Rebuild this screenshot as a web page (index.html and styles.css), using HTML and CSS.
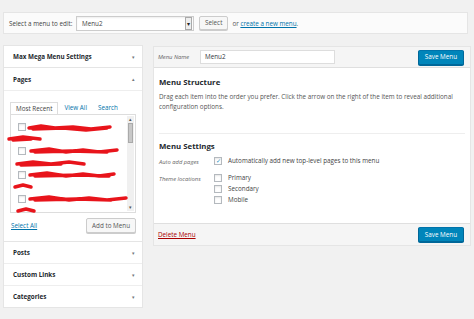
FILE: index.html
```html
<!DOCTYPE html>
<html lang="en">
<head>
  <meta charset="UTF-8">
  <title>Menus</title>
  <link rel="stylesheet" href="styles.css">
</head>
<body>

<!-- Menu picker -->
<div class="manage-menus">
  <span class="picker-label">Select a menu to edit:</span>
  <div class="fake-select">
    <span>Menu2</span>
    <span class="select-arrow">&#9662;</span>
  </div>
  <button class="btn">Select</button>
  <span class="or-text">or <a href="#">create a new menu</a>.</span>
</div>

<div class="columns">

  <!-- Left: accordion of items to add -->
  <div class="side">
    <div class="box">
      <div class="box-head">Max Mega Menu Settings <span class="arrow">&#9662;</span></div>
    </div>

    <div class="box accordion">
      <div class="box-head">Pages <span class="arrow">&#9652;</span></div>
      <div class="box-body">
        <div class="tabs">
          <span class="tab active">Most Recent</span>
          <a class="tab" href="#">View All</a>
          <a class="tab" href="#">Search</a>
        </div>
        <div class="tab-panel">
          <ul class="page-list">
            <li><span class="check"></span></li>
            <li><span class="check"></span></li>
            <li><span class="check"></span></li>
            <li><span class="check"></span></li>
          </ul>
          <div class="scrollbar">
            <span class="sb-arrow">&#9652;</span>
            <span class="sb-thumb"></span>
            <span class="sb-fill"></span>
            <span class="sb-arrow">&#9662;</span>
          </div>
          <!-- redacted titles -->
          <svg class="scribbles" width="130" height="100" viewBox="0 0 130 100">
            <g fill="none" stroke="#e8141b" stroke-linecap="round" stroke-linejoin="round">
              <path stroke-width="3.5" d="M18 13 L30 11 L44 13 L62 12 L80 14 L99 12 M22 14 L52 13 L75 15 L96 13"/>
              <path stroke-width="3.5" d="M-2 24 L12 22 L29 24 M2 25 L20 24"/>
              <path stroke-width="3.5" d="M20 36 L38 34 L55 37 L72 35 L88 37 L106 35 M24 37 L60 36 L96 37"/>
              <path stroke-width="3.5" d="M6 49 L22 47 L40 49 L58 47 L73 49 M10 50 L50 49"/>
              <path stroke-width="3.5" d="M19 60 L36 58 L55 61 L72 59 L88 61 L103 59 M24 61 L70 60 L98 61"/>
              <path stroke-width="3.5" d="M4 72 L12 70 L20 72"/>
              <path stroke-width="3.5" d="M19 84 L38 82 L58 85 L78 83 L96 85 L115 83 M24 85 L66 84 L100 85"/>
              <path stroke-width="3.5" d="M7 96 L15 94 L23 96"/>
            </g>
          </svg>
        </div>
        <div class="box-actions">
          <a href="#">Select All</a>
          <button class="btn">Add to Menu</button>
        </div>
      </div>
    </div>

    <div class="box stack">
      <div class="box-head">Posts <span class="arrow">&#9662;</span></div>
      <div class="box-head">Custom Links <span class="arrow">&#9662;</span></div>
      <div class="box-head">Categories <span class="arrow">&#9662;</span></div>
    </div>
  </div>

  <!-- Right: menu editor -->
  <div class="main">
    <div class="main-head">
      <label class="field-label">Menu Name</label>
      <div class="name-input">Menu2</div>
      <button class="btn primary">Save Menu</button>
    </div>

    <div class="main-body">
      <h3>Menu Structure</h3>
      <p>Drag each item into the order you prefer. Click the arrow on the right of the item to reveal additional configuration options.</p>

      <div class="settings">
        <h3>Menu Settings</h3>
        <div class="setting-row">
          <span class="field-label">Auto add pages</span>
          <div class="options">
            <label><span class="check checked">&#10003;</span>Automatically add new top-level pages to this menu</label>
          </div>
        </div>
        <div class="setting-row">
          <span class="field-label">Theme locations</span>
          <div class="options">
            <label><span class="check"></span>Primary</label>
            <label><span class="check"></span>Secondary</label>
            <label><span class="check"></span>Mobile</label>
          </div>
        </div>
      </div>
    </div>

    <div class="main-foot">
      <a class="delete" href="#">Delete Menu</a>
      <button class="btn primary">Save Menu</button>
    </div>
  </div>

</div>

</body>
</html>
```

FILE: styles.css
```css
body { margin: 0; background: #f1f1f1; font-family: "Open Sans", "Noto Sans", sans-serif; font-size: 6.3px; color: #444; }
a { color: #0073aa; }
button { font-family: inherit; }

/* top bar */
.manage-menus { display: flex; align-items: center; margin: 12px 6px 0 3px; height: 20px; padding: 0 5px; background: #fbfbfb; border: 1px solid #e5e5e5; }
.picker-label { width: 67px; color: #444; }
.fake-select { display: flex; justify-content: space-between; align-items: center; width: 118px; height: 15px; border: 1px solid #ccc; background: #fff; padding-left: 5px; box-sizing: border-box; box-shadow: inset 0 1px 2px rgba(0,0,0,0.07); }
.select-arrow { width: 7px; height: 13px; margin-right: 1px; border: 1px solid #aaa; background: #eee; font-size: 6px; line-height: 12px; text-align: center; color: #222; box-sizing: border-box; }
.btn { height: 14px; padding: 0 5px; border: 1px solid #ccc; border-radius: 2px; background: #f7f7f7; color: #555; font-size: 6.3px; line-height: 12px; box-shadow: 0 1px 0 #ccc; }
.manage-menus .btn { margin-left: 5px; }
.or-text { margin-left: 4px; color: #555; }
.or-text a { text-decoration: underline; }

/* columns */
.columns { display: flex; align-items: flex-start; gap: 10px; margin: 11px 3px 0 3px; }
.side { width: 140px; }
.main { flex: 1; margin-top: 1px; border: 1px solid #e5e5e5; background: #fff; }

/* left boxes */
.box { background: #fff; border: 1px solid #e5e5e5; }
.box + .box { border-top: 0; }
.box-head { display: flex; justify-content: space-between; align-items: center; height: 21px; padding: 0 7px 0 9px; font-weight: 700; font-size: 6.3px; color: #23282d; }
.arrow { font-size: 5px; color: #72777c; font-weight: 400; }
.accordion .box-head { height: 22px; border-bottom: 1px solid #eee; }
.box-body { padding: 10px 6px 8px 6px; }
.tabs { display: flex; align-items: flex-end; height: 13px; }
.tab { padding: 0 5px; line-height: 12px; text-decoration: none; color: #0073aa; margin-right: 1px; }
.tab.active { color: #444; border: 1px solid #ddd; border-bottom: 0; background: #fff; margin-bottom: -1px; position: relative; }
.tab-panel { position: relative; display: flex; height: 99px; border: 1px solid #ddd; box-sizing: border-box; }
.page-list { flex: 1; list-style: none; margin: 0; padding: 7px 0 0 7px; }
.page-list li { height: 24px; }
.check { display: inline-block; width: 6px; height: 6px; border: 1px solid #b4b9be; background: #fff; margin-right: 6px; vertical-align: middle; box-shadow: inset 0 1px 2px rgba(0,0,0,0.1); font-size: 6px; line-height: 6px; text-align: center; color: #1e8cbe; }
.scrollbar { display: flex; flex-direction: column; width: 7px; margin: 1px 1px 1px 0; background: #f0f0f0; }
.sb-arrow { height: 7px; font-size: 5px; line-height: 7px; text-align: center; color: #555; }
.sb-thumb { height: 18px; margin: 0 1px; background: #c8c8c8; border: 1px solid #aaa; }
.sb-fill { flex: 1; }
.scribbles { position: absolute; left: 0; top: 0; overflow: visible; }
.box-actions { display: flex; justify-content: space-between; align-items: center; margin-top: 5px; padding-left: 1px; }
.box-actions a { text-decoration: underline; }
.box-actions .btn { height: 15px; }
.stack .box-head { height: 21px; border-bottom: 1px solid #eee; }
.stack .box-head:last-child { border-bottom: 0; }

/* right panel */
.main-head, .main-foot { display: flex; align-items: center; height: 20px; padding: 0 6px 0 4px; background: #f5f5f5; }
.main-head { border-bottom: 1px solid #dfdfdf; }
.field-label { font-style: italic; color: #666; font-size: 5.8px; }
.main-head .field-label { width: 42px; }
.name-input { width: 129px; height: 12px; padding-left: 4px; border: 1px solid #ddd; background: #fff; line-height: 12px; color: #32373c; }
.main-head .btn, .main-foot .btn { margin-left: auto; }
.btn.primary { height: 15px; padding: 0 6px; background: #0085ba; border-color: #0073aa #006799 #006799; color: #fff; box-shadow: 0 1px 0 #006799; }
.main-body { padding: 9px 5px 19px 5px; }
h3 { margin: 0; font-size: 7.8px; color: #23282d; font-weight: 700; }
.main-body p { margin: 5px 0 0 0; line-height: 10px; color: #555; }
.settings { margin-top: 21px; padding-top: 7px; border-top: 1px solid #eee; }
.settings h3 { margin-bottom: 6px; }
.setting-row { display: flex; margin-bottom: 8px; }
.setting-row:last-child { margin-bottom: 0; }
.setting-row .field-label { width: 55px; padding-top: 1px; }
.options { display: flex; flex-direction: column; gap: 3px; }
.options label { display: flex; align-items: center; color: #444; line-height: 8px; }
.main-foot { border-top: 1px solid #dfdfdf; height: 21px; }
.delete { color: #a00; text-decoration: underline; }
```
